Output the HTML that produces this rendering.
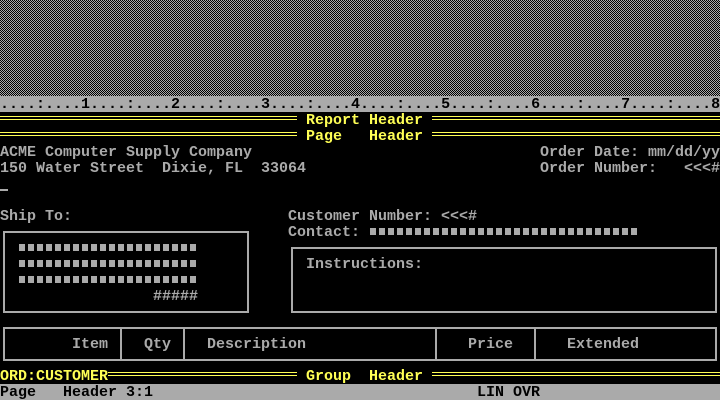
<!DOCTYPE html>
<html><head><meta charset="utf-8"><style>
html,body{margin:0;padding:0;background:#000;width:720px;height:400px;overflow:hidden}
body{position:relative;font-family:"Liberation Mono",monospace;font-size:15px;font-weight:bold;line-height:16px}
.t{position:absolute;white-space:pre;height:16px;color:#aaa;padding-top:1px}
.y{color:#ffff55}
.k{color:#000}
.dith{position:absolute;left:0;top:0;width:720px;height:96px;background:repeating-conic-gradient(#aaa 0 25%,#000 0 50%) 0 0/2px 2px}
.bar{position:absolute;left:0;width:720px;height:16px;background:#aaa}
.dl{position:absolute;height:1px;background:#ffff55}
.bx{position:absolute;border:2px solid #aaa;box-sizing:border-box}
.v{position:absolute;width:2px;background:#aaa}
.blk{position:absolute;height:7px;background:repeating-linear-gradient(90deg,transparent 0 1px,#aaa 1px 7px,transparent 7px 9px)}
</style></head><body>
<div class="dith"></div>
<div class="bar" style="top:96px"></div>
<div class="t k" style="left:0;top:96px">....:....1....:....2....:....3....:....4....:....5....:....6....:....7....:....8</div>

<div class="dl" style="left:0;width:297px;top:116px"></div><div class="dl" style="left:0;width:297px;top:119px"></div>
<div class="t y" style="left:306px;top:112px">Report Header</div>
<div class="dl" style="left:432px;width:288px;top:116px"></div><div class="dl" style="left:432px;width:288px;top:119px"></div>

<div class="dl" style="left:0;width:297px;top:132px"></div><div class="dl" style="left:0;width:297px;top:135px"></div>
<div class="t y" style="left:306px;top:128px">Page   Header</div>
<div class="dl" style="left:432px;width:288px;top:132px"></div><div class="dl" style="left:432px;width:288px;top:135px"></div>

<div class="t" style="left:0;top:144px">ACME Computer Supply Company</div>
<div class="t" style="left:540px;top:144px">Order Date: mm/dd/yy</div>
<div class="t" style="left:0;top:160px">150 Water Street  Dixie, FL  33064</div>
<div class="t" style="left:540px;top:160px">Order Number:   &lt;&lt;&lt;#</div>
<div style="position:absolute;left:0;top:189px;width:8px;height:2px;background:#aaa"></div>

<div class="t" style="left:0;top:208px">Ship To:</div>
<div class="t" style="left:288px;top:208px">Customer Number: &lt;&lt;&lt;#</div>
<div class="t" style="left:288px;top:224px">Contact:</div>
<div class="blk" style="left:369px;top:228px;width:270px"></div>

<div class="bx" style="left:3px;top:231px;width:246px;height:82px"></div>
<div class="blk" style="left:18px;top:244px;width:180px"></div>
<div class="blk" style="left:18px;top:260px;width:180px"></div>
<div class="blk" style="left:18px;top:276px;width:180px"></div>
<div class="t" style="left:153px;top:288px">#####</div>

<div class="bx" style="left:291px;top:247px;width:426px;height:66px"></div>
<div class="t" style="left:306px;top:256px">Instructions:</div>

<div class="bx" style="left:3px;top:327px;width:714px;height:34px"></div>
<div class="v" style="left:120px;top:327px;height:34px"></div>
<div class="v" style="left:183px;top:327px;height:34px"></div>
<div class="v" style="left:435px;top:327px;height:34px"></div>
<div class="v" style="left:534px;top:327px;height:34px"></div>
<div class="t" style="left:72px;top:336px">Item</div>
<div class="t" style="left:144px;top:336px">Qty</div>
<div class="t" style="left:207px;top:336px">Description</div>
<div class="t" style="left:468px;top:336px">Price</div>
<div class="t" style="left:567px;top:336px">Extended</div>

<div class="t y" style="left:0;top:368px">ORD:CUSTOMER</div>
<div class="dl" style="left:108px;width:189px;top:372px"></div><div class="dl" style="left:108px;width:189px;top:375px"></div>
<div class="t y" style="left:306px;top:368px">Group  Header</div>
<div class="dl" style="left:432px;width:288px;top:372px"></div><div class="dl" style="left:432px;width:288px;top:375px"></div>

<div class="bar" style="top:384px"></div>
<div class="t k" style="left:0;top:384px">Page   Header 3:1</div>
<div class="t k" style="left:477px;top:384px">LIN OVR</div>
</body></html>
